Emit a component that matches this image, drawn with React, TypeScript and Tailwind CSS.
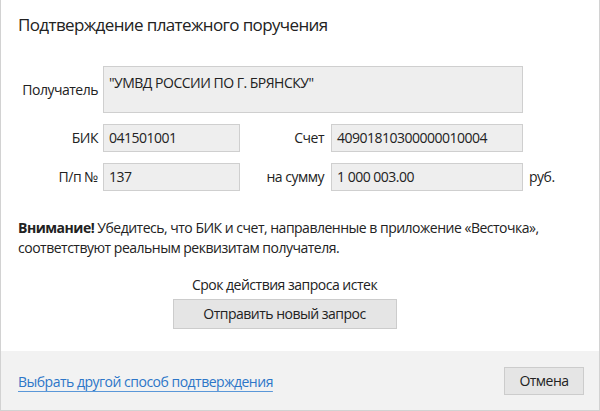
import React from "react";

const font = { fontFamily: '"Open Sans", "Noto Sans", sans-serif' };

function Field({ children, className = "" }: { children: React.ReactNode; className?: string }) {
  return (
    <div className={"h-[28px] bg-[#eeeeee] border border-[#cfcfcf] px-[5px] flex items-center text-[14px] text-[#222] " + className}>
      {children}
    </div>
  );
}

export default function App() {
  return (
    <div
      className="w-[600px] h-[411px] bg-white border-x border-b border-[#d2d2d2] flex flex-col text-[#222] tracking-[-0.5px]"
      style={font}
    >
      <div className="pt-[13px] px-[17px] text-[17px] leading-[24px] tracking-[-0.62px]">
        Подтверждение платежного поручения
      </div>

      <div className="mt-[29px] grid grid-cols-[102px_137px_91px_192px_auto] gap-y-[11px] text-[14px] leading-[20px]">
        <div className="pr-[5px] text-right self-center">Получатель</div>
        <div className="col-span-3 h-[47px] bg-[#eeeeee] border border-[#cfcfcf] px-[5px] pt-[6px]">
          "УМВД РОССИИ ПО Г. БРЯНСКУ"
        </div>
        <div />

        <div className="pr-[5px] text-right self-center">БИК</div>
        <Field>041501001</Field>
        <div className="pr-[7px] text-right self-center">Счет</div>
        <Field>40901810300000010004</Field>
        <div />

        <div className="pr-[5px] text-right self-center">П/п №</div>
        <Field>137</Field>
        <div className="pr-[7px] text-right self-center">на сумму</div>
        <Field>1 000 003.00</Field>
        <div className="pl-[6px] self-center">руб.</div>
      </div>

      <div className="mt-[27px] px-[17px] text-[14px] leading-[20px]">
        <b className="font-bold">Внимание!</b> Убедитесь, что БИК и счет, направленные в приложение «Весточка»,
        <br />
        соответствуют реальным реквизитам получателя.
      </div>

      <div className="mt-[17px] w-[567px] flex flex-col items-center text-[14px] leading-[20px]">
        <div>Срок действия запроса истек</div>
        <button className="mt-[4px] w-[224px] h-[30px] bg-[#e5e5e5] border border-[#cccccc] text-[14px] text-[#222] tracking-[-0.5px]">
          Отправить новый запрос
        </button>
      </div>

      <div className="flex-1" />

      <div className="h-[59px] bg-[#f2f2f2] flex items-center justify-between pl-[17px] pr-[15px]">
        <a
          href="#"
          className="text-[14px] leading-[20px] text-[#2d76c8] underline underline-offset-[4px] decoration-[#5a97d8] mt-[3px]"
        >
          Выбрать другой способ подтверждения
        </a>
        <button className="w-[80px] h-[28px] bg-[#e5e5e5] border border-[#cccccc] text-[14px] text-[#222] tracking-[-0.5px]">
          Отмена
        </button>
      </div>
    </div>
  );
}
